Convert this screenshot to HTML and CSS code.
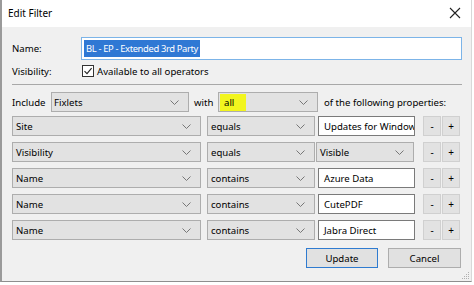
FILE: index.html
```html
<!DOCTYPE html>
<html>
<head>
<meta charset="utf-8">
<link rel="stylesheet" href="styles.css">
</head>
<body>
<div class="window">
  <div class="titlebar">
    <span class="title">Edit Filter</span>
    <svg class="close" width="12" height="12" viewBox="0 0 12 12"><path d="M1 1L11 11M11 1L1 11" stroke="#222" stroke-width="1.1" fill="none"/></svg>
  </div>
  <div class="content">
    <div class="namerow">
      <span class="label">Name:</span>
      <div class="nameinput"><span class="sel">BL - EP - Extended 3rd Party</span></div>
    </div>
    <div class="visrow">
      <span class="label">Visibility:</span>
      <span class="check"><svg width="12" height="12" viewBox="0 0 12 12"><rect x="0.5" y="0.5" width="11" height="11" fill="#fff" stroke="#333"/><path d="M2.5 6.2L5 8.7L9.6 3.2" stroke="#222" stroke-width="1.1" fill="none"/></svg></span>
      <span class="checklabel">Available to all operators</span>
    </div>
    <div class="sep"></div>
    <div class="includerow">
      <span class="inc">Include</span>
      <div class="select fix"><span>Fixlets</span><svg class="chev" width="9" height="5" viewBox="0 0 9 5"><path d="M0.5 0.5L4.5 4.5L8.5 0.5" stroke="#777" fill="none"/></svg></div>
      <span class="with">with</span>
      <div class="select all"><span class="hl">all</span><svg class="chev" width="9" height="5" viewBox="0 0 9 5"><path d="M0.5 0.5L4.5 4.5L8.5 0.5" stroke="#777" fill="none"/></svg></div>
      <span class="of">of the following properties:</span>
    </div>
    <div class="rows">
      <div class="row">
        <div class="select c1"><span>Site</span><svg class="chev" width="9" height="5" viewBox="0 0 9 5"><path d="M0.5 0.5L4.5 4.5L8.5 0.5" stroke="#777" fill="none"/></svg></div>
        <div class="select c2"><span>equals</span><svg class="chev" width="9" height="5" viewBox="0 0 9 5"><path d="M0.5 0.5L4.5 4.5L8.5 0.5" stroke="#777" fill="none"/></svg></div>
        <div class="input c3">Updates for Window</div>
        <div class="btns"><span class="sb">-</span><span class="sb">+</span></div>
      </div>
      <div class="row">
        <div class="select c1"><span>Visibility</span><svg class="chev" width="9" height="5" viewBox="0 0 9 5"><path d="M0.5 0.5L4.5 4.5L8.5 0.5" stroke="#777" fill="none"/></svg></div>
        <div class="select c2"><span>equals</span><svg class="chev" width="9" height="5" viewBox="0 0 9 5"><path d="M0.5 0.5L4.5 4.5L8.5 0.5" stroke="#777" fill="none"/></svg></div>
        <div class="select c3v"><span>Visible</span><svg class="chev" width="9" height="5" viewBox="0 0 9 5"><path d="M0.5 0.5L4.5 4.5L8.5 0.5" stroke="#777" fill="none"/></svg></div>
        <div class="btns"><span class="sb">-</span><span class="sb">+</span></div>
      </div>
      <div class="row">
        <div class="select c1"><span>Name</span><svg class="chev" width="9" height="5" viewBox="0 0 9 5"><path d="M0.5 0.5L4.5 4.5L8.5 0.5" stroke="#777" fill="none"/></svg></div>
        <div class="select c2"><span>contains</span><svg class="chev" width="9" height="5" viewBox="0 0 9 5"><path d="M0.5 0.5L4.5 4.5L8.5 0.5" stroke="#777" fill="none"/></svg></div>
        <div class="input c3">Azure Data</div>
        <div class="btns"><span class="sb">-</span><span class="sb">+</span></div>
      </div>
      <div class="row">
        <div class="select c1"><span>Name</span><svg class="chev" width="9" height="5" viewBox="0 0 9 5"><path d="M0.5 0.5L4.5 4.5L8.5 0.5" stroke="#777" fill="none"/></svg></div>
        <div class="select c2"><span>contains</span><svg class="chev" width="9" height="5" viewBox="0 0 9 5"><path d="M0.5 0.5L4.5 4.5L8.5 0.5" stroke="#777" fill="none"/></svg></div>
        <div class="input c3">CutePDF</div>
        <div class="btns"><span class="sb">-</span><span class="sb">+</span></div>
      </div>
      <div class="row">
        <div class="select c1"><span>Name</span><svg class="chev" width="9" height="5" viewBox="0 0 9 5"><path d="M0.5 0.5L4.5 4.5L8.5 0.5" stroke="#777" fill="none"/></svg></div>
        <div class="select c2"><span>contains</span><svg class="chev" width="9" height="5" viewBox="0 0 9 5"><path d="M0.5 0.5L4.5 4.5L8.5 0.5" stroke="#777" fill="none"/></svg></div>
        <div class="input c3">Jabra Direct</div>
        <div class="btns"><span class="sb">-</span><span class="sb">+</span></div>
      </div>
    </div>
    <div class="actions">
      <div class="btn primary">Update</div>
      <div class="btn">Cancel</div>
    </div>
    <svg class="grip" width="8" height="8" viewBox="0 0 8 8"><g fill="#b0b0b0"><rect x="6" y="0" width="1" height="1"/><rect x="4" y="2" width="1" height="1"/><rect x="6" y="2" width="1" height="1"/><rect x="2" y="4" width="1" height="1"/><rect x="4" y="4" width="1" height="1"/><rect x="6" y="4" width="1" height="1"/><rect x="0" y="6" width="1" height="1"/><rect x="2" y="6" width="1" height="1"/><rect x="4" y="6" width="1" height="1"/><rect x="6" y="6" width="1" height="1"/></g></svg>
  </div>
</div>
</body>
</html>
```

FILE: styles.css
```css
* { box-sizing: border-box; }
html, body { margin: 0; padding: 0; background: #fff; }
body {
  width: 474px; height: 285px; overflow: hidden;
  font-family: "Noto Sans", "Open Sans", sans-serif;
  font-size: 9.6px; color: #000;
}
.window {
  width: 472px; height: 282px;
  border-left: 2px solid #9a9a9a;
  border-right: 1px solid #d8d8d8;
  border-bottom: 1px solid #8e8e8e;
  display: flex; flex-direction: column;
  background: #f0f0f0;
}
.titlebar {
  height: 27px; flex: none; background: #fff;
  display: flex; align-items: center; justify-content: space-between;
  padding: 0 10px 2px 6px;
}
.title { font-size: 10px; color: #000; }
.close { margin-top: 1px; }
.content { position: relative; flex: 1; padding: 10px 9px 0 10px; }
.namerow { display: flex; align-items: center; height: 23px; }
.label { width: 69px; flex: none; }
.nameinput {
  flex: 1; height: 23px; background: #fff;
  border: 1px solid #7cb4e8; padding: 2px 2px;
  display: flex; align-items: center;
}
.sel {
  background: #2f78d4; color: #fff; padding: 0 2px 0 2px; line-height: 17px;
  font-size: 9.4px; letter-spacing: -0.35px;
}
.visrow { display: flex; align-items: center; height: 18px; margin-top: 2px; }
.check { display: flex; margin-right: 3px; margin-left: 1px; }
.sep { height: 1px; background: #a8a8a8; margin-top: 4px; width: 450px; }
.includerow { display: flex; align-items: center; margin-top: 7px; height: 20px; }
.inc { width: 39px; flex: none; }
.select {
  height: 20px; background: #e2e2e2; border: 1px solid #adadad;
  display: flex; align-items: center; justify-content: space-between;
  padding: 0 9px 0 3px; flex: none;
}
.select.fix { width: 138px; padding-left: 2px; }
.with { margin: 0 2px 0 5px; width: 22px; flex: none; }
.select.all { width: 100px; padding-left: 1px; }
.hl { background: #f2f51e; padding: 0 12px 0 4px; line-height: 17px; }
.of { margin-left: 6px; white-space: nowrap; }
.chev { flex: none; }
.rows { display: flex; flex-direction: column; gap: 6px; margin-top: 4px; }
.row { display: flex; align-items: center; height: 20px; }
.c1 { width: 189px; }
.c2 { width: 108px; margin-left: 6px; }
.c3 { width: 97px; margin-left: 3px; }
.c3v { width: 98px; margin-left: 1px; }
.row .btns { margin-left: 8px; }
.c3v + .btns { margin-left: 9px !important; }
.input {
  height: 20px; background: #fff; border: 1px solid #7a7a7a; flex: none;
  padding: 0 5px; display: flex; align-items: center; white-space: nowrap; overflow: hidden;
}
.btns { display: flex; gap: 1px; align-items: center; }
.sb {
  width: 18px; height: 20px; background: #e2e2e2; border: 1px solid #d0d0d0;
  display: flex; align-items: center; justify-content: center; font-size: 10px;
}
.actions { display: flex; justify-content: flex-end; gap: 10px; margin-top: 8px; width: 449px; }
.btn {
  width: 73px; height: 20px; background: #e1e1e1; border: 1px solid #adadad;
  display: flex; align-items: center; justify-content: center;
}
.btn.primary { border: 1px solid #2f7bd0; width: 72px; }
.grip { position: absolute; right: 1px; bottom: 1px; }
```
